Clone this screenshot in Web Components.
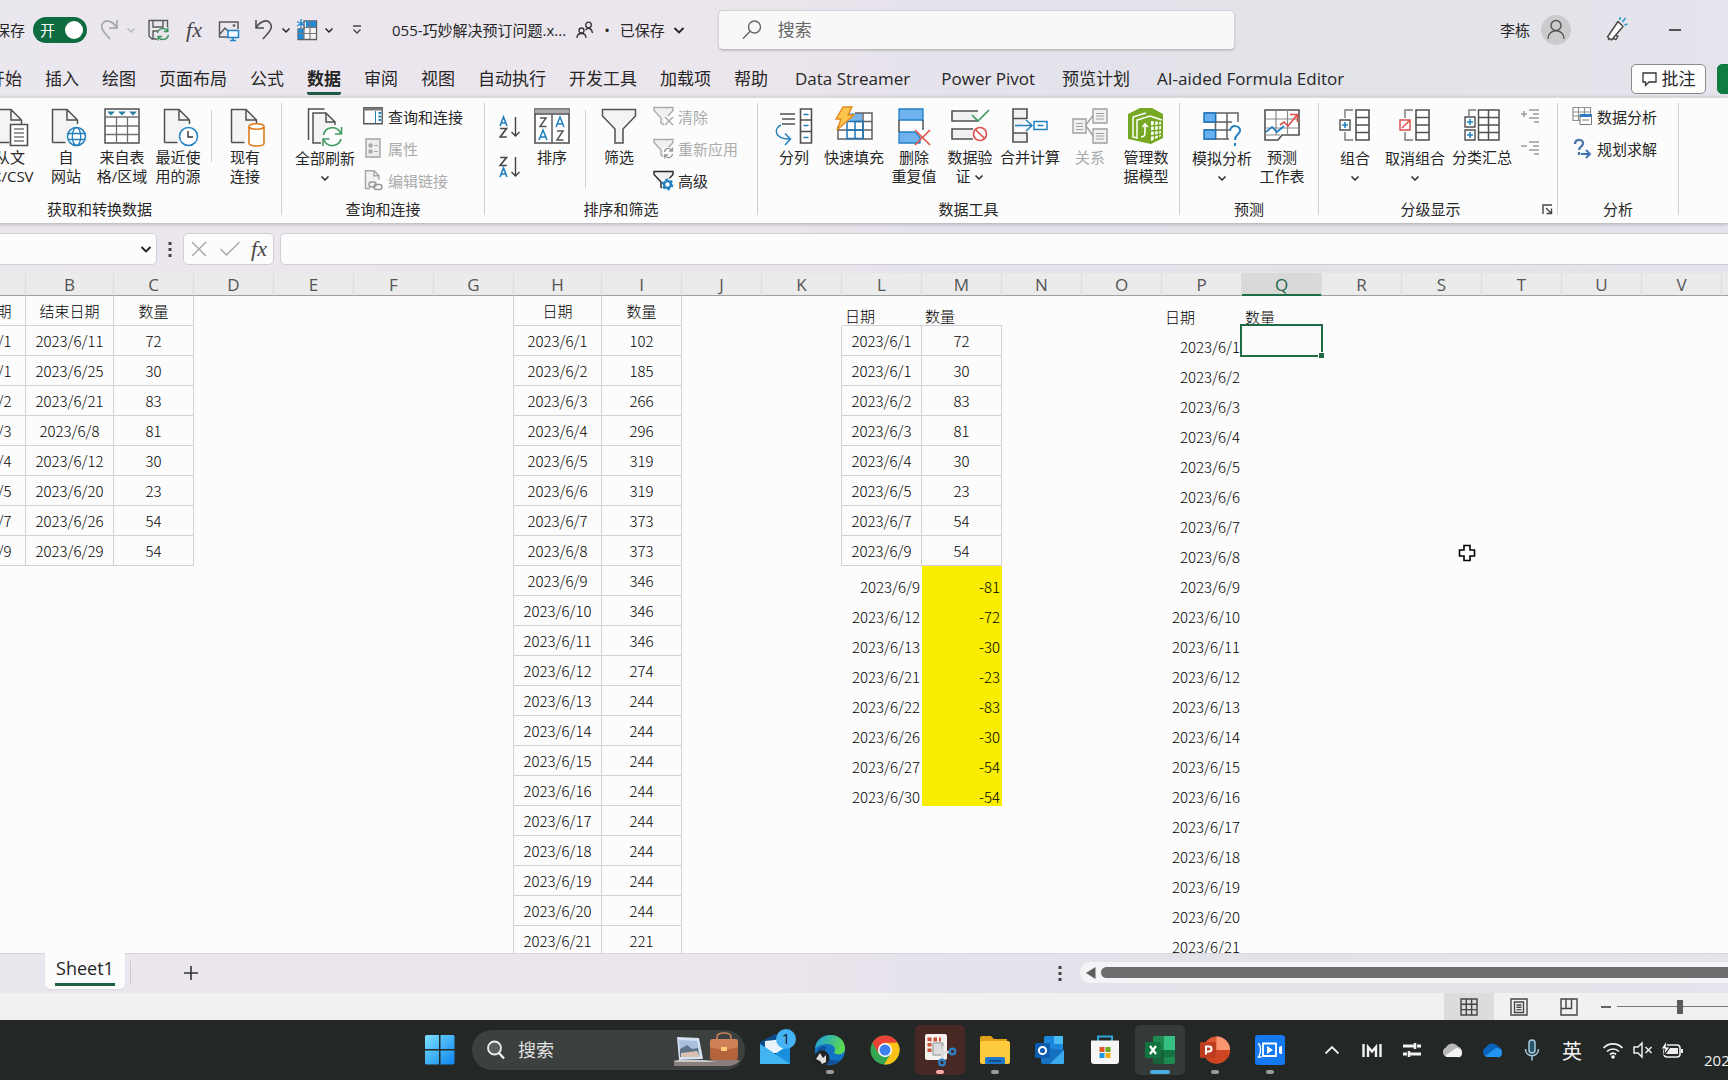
<!DOCTYPE html>
<html lang="zh-CN">
<head>
<meta charset="utf-8">
<title>055-巧妙解决预订问题</title>
<style>
html,body{margin:0;height:100%;overflow:hidden}
body{font-family:"Open Sans","Noto Sans CJK SC",sans-serif;font-size:15px;color:#262626;background:#e9e6ed}
</style>
</head>
<body>
<excel-window></excel-window>
<script>
const PAGE='<path d="M16 34.5H4.5V1.5h14.500l10 10v5" fill="#f4f4f4"/><path d="M4.500 34.500h13M4.500 34.500v-33H19l10.500 10.500v4M19 1.500V12h10.500" fill="none" stroke="#505050" stroke-width="1.500"/>';
const FUN='<path d="M1 1.500h19v3l-7 7.500v8l-5-3v-5L1 4.500z" fill="#f1f1f1" stroke="currentColor" stroke-width="1.400"/>';
const ICONS={
 chev:[10,10,'<path d="M1.500 3.500 5 7l3.500-3.500" fill="none" stroke="currentColor" stroke-width="1.500"/>'],
 chevb:[12,12,'<path d="M1.500 4 6 8.500 10.500 4" fill="none" stroke="#222" stroke-width="1.800"/>'],
 redo:[20,24,'<path d="M18 2v8h-8M18 10C14 3 7 1 4 5c-4 5 2 10 7 16" fill="none" stroke="#a5a5ab" stroke-width="1.600"/>'],
 undo:[20,24,'<path d="M2 2v8h8M2 10C6 3 13 1 16 5c4 5-2 10-7 16" fill="none" stroke="#505055" stroke-width="1.600"/>'],
 save:[22,22,'<path d="M9 20H4l-3-3V1.500h18.500V8M5 1.500V8h10V1.500M5 20v-8h5" fill="none" stroke="#5a5a5a" stroke-width="1.400"/><path d="M9.500 14a5.500 5.500 0 0 1 10-2M19.800 8.500v4h-4M20.500 16a5.500 5.500 0 0 1-10 2M10.200 21.500v-4h4" fill="none" stroke="#3f9460" stroke-width="1.500"/>'],
 pic:[22,22,'<path d="M10 18H1.500V3H20v7M2 15l5-6 4 4" fill="none" stroke="#5a5a5a" stroke-width="1.500"/><circle cx="16" cy="6.500" r="1.300" fill="#555"/><path d="M10 11.500h10.500v7H10zM15 18.500v3M12 21.500h6" fill="#f3faff" stroke="#1e82cc" stroke-width="1.500"/>'],
 qtable:[22,22,'<path d="M8 2h12.500v18.500H2V10h6z" fill="#f7f7f7" stroke="#606060" stroke-width="1.300"/><path d="M10 2h10v6H10zM2 10h6v10H2z" fill="#238bd6"/><path d="M2 14.500h18M8 8.500h12M8 8.500v12M14 2v18" stroke="#777" stroke-width="1.200" fill="none"/><path d="M5 0v9M1 2.500l8 4.500M9 2.500 1 7" stroke="#1e82cc" stroke-width="1.300"/>'],
 custom:[12,12,'<path d="M2 2h8M2.500 5.500 6 9l3.500-3.500" fill="none" stroke="#444" stroke-width="1.300"/>'],
 people:[18,18,'<g fill="none" stroke="#333" stroke-width="1.300"><circle cx="12.500" cy="4" r="2.800"/><path d="M9.500 9c2-2.500 6-2.500 7 3"/><circle cx="5.500" cy="9.500" r="2.500"/><path d="M1 17c0-6 9-6 9 0"/></g>'],
 search:[22,22,'<circle cx="13.500" cy="8" r="6" fill="none" stroke="currentColor" stroke-width="1.400"/><path d="M9.200 12.300 2 19.500" stroke="currentColor" stroke-width="1.400"/>'],
 avatar:[30,30,'<circle cx="15" cy="15" r="15" fill="#cbcbcd"/><circle cx="15" cy="10.500" r="5" fill="none" stroke="#555" stroke-width="1.400"/><path d="M7 24c0-11 16-11 16 0" fill="none" stroke="#555" stroke-width="1.400"/>'],
 pen:[24,24,'<path d="M14 3.500 3.500 19l4 3L19 8.500zM5.500 20.500l-1.500 1.500M11 17.500l3 .5-2 3.500-3-1" fill="#fff" stroke="#444" stroke-width="1.400" stroke-linejoin="round"/><path d="M16 2V-1M18.500 4l3-4M20.500 7l3-1" stroke="#2796c6" stroke-width="1.500"/>'],
 min:[14,14,'<path d="M1 7h12" stroke="#222" stroke-width="1.500"/>'],
 comment:[16,16,'<path d="M1 2h13v9H7l-3.500 3.500V11H1z" fill="none" stroke="#333" stroke-width="1.300"/>'],
 file:[36,36,PAGE+'<path d="M18.500 16.500h17v21h-17z" fill="#fff" stroke="#505050" stroke-width="1.600"/><path d="M22 21h10M22 25h10M22 29h10M22 33h10" stroke="#777" stroke-width="1.300"/>'],
 web:[36,36,PAGE+'<circle cx="28.500" cy="28.500" r="9" fill="#fff" stroke="#2080bd" stroke-width="1.500"/><g fill="none" stroke="#2080bd" stroke-width="1.300"><ellipse cx="28.500" cy="28.500" rx="4.200" ry="9"/><path d="M20 25.500h17M20 31.500h17"/></g>'],
 tbl:[36,36,'<path d="M1 1h34v34H1z" fill="#fff" stroke="#505050" stroke-width="1.500"/><path d="M1 9h34M1 18h34M1 26.500h34M12.500 9v26M23.500 9v26" stroke="#707070" stroke-width="1.300"/><path d="M3 3.500h8L7 7.500zM14 3.500h8l-4 4zM25 3.500h8l-4 4z" fill="#2a7f9e"/>'],
 recent:[36,36,PAGE+'<circle cx="28.500" cy="28.500" r="9" fill="#fff" stroke="#2083c5" stroke-width="1.500"/><path d="M28 23v6h5" fill="none" stroke="#333" stroke-width="1.400"/>'],
 conn:[36,36,PAGE+'<path d="M22 19v16c0 4 15 4 15 0V19" fill="#fff" stroke="#e07c1c" stroke-width="1.600"/><ellipse cx="29.500" cy="18.500" rx="7.500" ry="2.800" fill="#fff" stroke="#e07c1c" stroke-width="1.600"/>'],
 refresh:[36,36,'<path d="M1.500 32V1h16" fill="none" stroke="#505050" stroke-width="1.500"/><path d="M15 35H6V5h14l9 9" fill="#f4f4f4"/><path d="M14 35H6V5h13l9 9v3M19 5v9h9" fill="none" stroke="#505050" stroke-width="1.500"/><circle cx="25" cy="28.500" r="10.500" fill="#fcfcfc"/><path d="M16.500 27a9 9 0 0 1 17-2M34.500 19v7H28M34 31a9 9 0 0 1-17 1M16 38v-7h6.500" fill="none" stroke="#419b62" stroke-width="1.600"/>'],
 qpane:[20,20,'<path d="M.8 1.800h18.400v16H.8z" fill="#fff" stroke="#555" stroke-width="1.400"/><path d="M1 3h18" stroke="#777" stroke-width="3"/><path d="M12.500 5v12" stroke="#2080bd"/><path d="M15.500 7h2.500M15.500 10.500h2.500M15.500 14h2.500" stroke="#2080bd" stroke-width="2"/>'],
 props:[20,20,'<path d="M3 1h14v18H3z" fill="#eee" stroke="#a4a4a4" stroke-width="1.400"/><path d="M6 6h3v3H6zM6 12h3v3H6zM11 7.500h4M11 13.500h4" fill="#aaa" stroke="#aaa"/>'],
 links:[20,20,'<path d="M7 18.500H2.500V.8H11l5 5v4M11 .8v5h5" fill="#f2f2f2" stroke="#a4a4a4" stroke-width="1.400"/><rect x="6" y="12" width="7" height="5" rx="2.500" fill="none" stroke="#999" stroke-width="1.400"/><rect x="11" y="14.500" width="8" height="5" rx="2.500" fill="none" stroke="#999" stroke-width="1.400"/>'],
 az:[22,22,'<path d="m1 10 3.500-9L8 10M2.300 7h4.500" fill="none" stroke="#2080bd" stroke-width="1.600"/><path d="M1.200 12.500h6.300L1.200 21h6.600" fill="none" stroke="#444" stroke-width="1.600"/><path d="M16.500 1v19M12.500 16l4 4 4-4" fill="none" stroke="#444" stroke-width="1.400"/>'],
 za:[22,22,'<path d="M1.200 1.500h6.300L1.200 9.500h6.600" fill="none" stroke="#444" stroke-width="1.600"/><path d="m1 21 3.500-9L8 21M2.300 18h4.500" fill="none" stroke="#2080bd" stroke-width="1.600"/><path d="M16.500 1v19M12.500 16l4 4 4-4" fill="none" stroke="#444" stroke-width="1.400"/>'],
 sort:[36,36,'<path d="M1 1h34v34H1z" fill="#fff" stroke="#505050" stroke-width="1.600"/><path d="M1 3.500h34" stroke="#aaa" stroke-width="4"/><path d="M1 6h34M18 6v29" stroke="#505050" stroke-width="1.400"/><path d="M6 10h6l-6 8.500h6.500M23 23h6l-6 9h6.500" fill="none" stroke="#555" stroke-width="1.500"/><path d="m5 32 4-10 4 10M6.500 29h5M22 19l4-10 4 10M23.500 16h5" fill="none" stroke="#2080bd" stroke-width="1.500"/>'],
 filter:[36,36,'<path d="M1.500 1.500h33V8L22 21v14h-8V21L1.500 8z" fill="#f4f4f4" stroke="#505050" stroke-width="1.500"/>'],
 fclear:[20,20,FUN+'<path d="M11 10h10v11H11z" fill="#fcfcfc"/><path d="m12 11 8 8M20 11l-8 8" stroke="#aaa" stroke-width="1.400"/>'],
 freap:[20,20,FUN+'<path d="M10 9h11v12H10z" fill="#fcfcfc"/><path d="M11.500 14a4 4 0 0 1 7.500-1.500M19.500 9.500V13H16M19.500 16a4 4 0 0 1-7.500 1.500M11.500 20.500V17H15" fill="none" stroke="#999" stroke-width="1.300"/>'],
 fadv:[20,20,FUN+'<path d="M9 8.500h12V21H9z" fill="#fcfcfc"/><circle cx="14.500" cy="14.500" r="3.400" fill="none" stroke="#2080bd" stroke-width="2.400"/><circle cx="14.500" cy="14.500" r="5" fill="none" stroke="#2080bd" stroke-width="1.800" stroke-dasharray="2.600"/>'],
 split:[38,36,'<path d="M25.500 1h11v34h-11zM25.500 12h11M25.500 23.500h11" fill="#fff" stroke="#505050" stroke-width="1.600"/><path d="M5 6h15M7 11h13M7 16h13" stroke="#505050" stroke-width="1.400"/><path d="M28.500 6.500h5M28.500 17.500h5M28.500 29.500h5" stroke="#2080bd" stroke-width="1.600"/><path d="M6 17c-8 4-6 14 8 14M10 25.500l5.500 5.500-5.500 6" fill="none" stroke="#2080bd" stroke-width="1.500"/>'],
 flash:[38,36,'<path d="M3 5h34v26H3z" fill="#fff"/><path d="M13 5h14v9H13z" fill="#78b7ec"/><path d="M20 5h17v26H3V18M3 22h34M20 13.500h17M28 5v26" fill="none" stroke="#606060" stroke-width="1.500"/><path d="M12 13.500h16v17H12zM12 22h16M20 13v18" fill="none" stroke="#1d75b8" stroke-width="1.500"/><path d="M8-1h9l-4 8h6L2 22l4-11H1z" fill="#fbc44d" stroke="#e58a1d" stroke-width="1.400"/>'],
 dup:[36,36,'<path d="M3 1h24v34H3z" fill="#fff"/><path d="M3 1h24v11H3zM3 24h16l5 5v6H3z" fill="#70b2ed" stroke="#2080c5" stroke-width="1.300"/><path d="M3 12v12M27 12v10" stroke="#505050" stroke-width="1.500"/><path d="m19 22 15 15M34 22 19 37" stroke="#e0574c" stroke-width="1.700"/>'],
 valid:[38,36,'<path d="M27 3H1v10h26M22 21H1v10h21" fill="#f1f1f1" stroke="#505050" stroke-width="1.600"/><path d="M21 7l6 6L38 2" fill="none" stroke="#419b62" stroke-width="1.700"/><circle cx="29" cy="26" r="6.500" fill="#fff" stroke="#dd524c" stroke-width="1.700"/><path d="m24.500 21.500 9 9" stroke="#dd524c" stroke-width="1.700"/>'],
 merge:[36,36,'<path d="M15 11V1H1v33h14V25H1M1 10.500h14" fill="#f1f1f1" stroke="#505050" stroke-width="1.600"/><path d="M3 17.500h16M14 12l6 5.500-6 5.500" fill="none" stroke="#2080bd" stroke-width="1.500"/><path d="M22 13.500h13v8H22zM25.500 17.500h6" fill="#fff" stroke="#2080bd" stroke-width="1.500"/>'],
 rel:[36,36,'<g fill="#f1f1f1" stroke="#a0a0a0" stroke-width="1.400"><path d="M14 17 22 6M14 18l8 11"/><path d="M1 11h13v14H1zM21 1h14v14H21zM21 21h14v14H21z"/><path d="M4 15.500h7M4 18.500h7M4 21.500h7M24 5.500h8M24 8h8M24 11h8M24 25.500h8M24 28h8M24 31h8" stroke-width="1.200"/></g>'],
 model:[36,36,'<path d="M0 6 12 0h12l11 6v24l-12 6L0 31z" fill="#76a823"/><path d="M5 9 18 5M5 9v20l4 1V12l13-4 12 4" stroke="#fff" stroke-width="1.500" fill="none"/><path d="M23 13l10 1v14l-10 5z" fill="#fff"/><path d="M22.500 18 34 17M22.500 23l11.500-1M22.500 28l11.500-2M26.500 13v20M30.500 13v17M12 13v16M12 17l8-1" stroke="#76a823" stroke-width="1.400"/><path d="M17 17v8c0 4-4 4-4 4M14.500 19l2.500-3 3 3" fill="none" stroke="#fff" stroke-width="1.600"/>'],
 whatif:[38,36,'<path d="M1 5h34v26H1z" fill="#fff"/><path d="M1 5h34v9M1 14h28M1 22h25M1 31h25M12.500 5v26M24 5v26" fill="none" stroke="#606060" stroke-width="1.500"/><path d="M1 5h11.500v9H1zM1 22h11.500v9H1z" fill="#69b0f0" stroke="#1d75b8" stroke-width="1.500"/><path d="M27 23c0-7 11-6 10 0-1 4-5 3.500-5 9M32 35v3" fill="none" stroke="#2080bd" stroke-width="2"/>'],
 forecast:[36,36,'<path d="M1 2h34v25H18l-4 5H1z" fill="#fff" stroke="#505050" stroke-width="1.600"/><path d="M1 11h34M1 20h34M12 2v25M23.500 2v25M1 27h15" stroke="#888" stroke-width="1.200"/><path d="m2 24 6-5 5 5 7-6" fill="none" stroke="#2080bd" stroke-width="1.700"/><path d="m16 17 4-3 4 4 9-11M26 6.500h7.500V14" fill="none" stroke="#dd524c" stroke-width="1.700"/>'],
 group:[32,36,'<path d="M14 2H6v8M6 24v8h8" fill="none" stroke="#777" stroke-width="1.400"/><path d="M17 2h13v30H17zM17 9.500h13M17 17h13M17 24.500h13" fill="#fff" stroke="#505050" stroke-width="1.600"/><path d="M1 12h10v10H1z" fill="#fff" stroke="#505050" stroke-width="1.400"/><path d="M6 14v6M3 17h6" stroke="#2080bd" stroke-width="1.600"/>'],
 ungroup:[32,36,'<path d="M14 2H6v8M6 24v8h8" fill="none" stroke="#777" stroke-width="1.400"/><path d="M17 2h13v30H17zM17 9.500h13M17 17h13M17 24.500h13" fill="#fff" stroke="#505050" stroke-width="1.600"/><path d="M1 12h10v10H1zM3 20l7-7" fill="#fff" stroke="#dd524c" stroke-width="1.500"/>'],
 subtotal:[36,36,'<path d="M12 2H5v6" fill="none" stroke="#777" stroke-width="1.400"/><path d="M14.500 2h20.500v30H14.500zM14.500 9.500H35M14.500 17H35M14.500 24.500H35M24.500 2v30" fill="#fff" stroke="#505050" stroke-width="1.500"/><path d="M1 9h10v10H1zM1 22h10v10H1z" fill="#fff" stroke="#505050" stroke-width="1.400"/><path d="M6 11v6M3 14h6M6 24v6M3 27h6" stroke="#2080bd" stroke-width="1.600"/>'],
 expand:[20,16,'<path d="M1 6h6M4 3v6M9 2h10M13 6h6M9 10h10M14 14h5" stroke="#9a9a9a" stroke-width="1.500"/>'],
 collapse:[20,16,'<path d="M1 6h6M9 2h10M13 6h6M9 10h10M14 14h5" stroke="#9a9a9a" stroke-width="1.500"/>'],
 launch:[11,11,'<path d="M1 10V1h9M4 4l5 5M9.500 4.500v5h-5" fill="none" stroke="#444" stroke-width="1.400"/>'],
 danal:[20,20,'<path d="M1 1.500h17.500v13H1zM1 6h17M1 10h17M6.500 1v14M12.500 1v14" fill="#fff" stroke="#909090" stroke-width="1.200"/><path d="M8 8.500h11.500v10H8z" fill="#fff" stroke="#777"/><path d="M8 9.500h11.500" stroke="#2b7ac4" stroke-width="3"/><path d="M10 14h7" stroke="#777"/>'],
 solver:[20,20,'<path d="M3 6c0-6 9-5 8 0-1 3-4 3-4 6M7 14v3" fill="none" stroke="#4a75ab" stroke-width="2.300"/><path d="M9 16h8M14 12l4 4-4 4" fill="none" stroke="#3c70b0" stroke-width="1.800"/>'],
 dots:[4,16,'<path d="M.5 1h3v3h-3zM.5 7h3v3h-3zM.5 13h3v3h-3z" fill="#444"/>'],
 x:[18,18,'<path d="m2 2 14 14M16 2 2 16" stroke="#aaa" stroke-width="1.500"/>'],
 check:[22,18,'<path d="m1.500 9 6 6 13-13" fill="none" stroke="#aaa" stroke-width="1.500"/>'],
 plus:[14,14,'<path d="M0 7h14M7 0v14" stroke="#333" stroke-width="1.600"/>'],
 left:[10,12,'<path d="M9.500 0v12L0 6z" fill="#5e5e5e"/>'],
 vgrid:[18,18,'<path d="M1 1h16v16H1zM1 6.300h16M1 11.600h16M6.300 1v16M11.600 1v16" fill="none" stroke="#444" stroke-width="1.400"/>'],
 vpage:[18,18,'<path d="M1 1h16v16H1zM4.500 4h9v10.500h-9zM6.500 7h5M6.500 9.300h5M6.500 11.600h5" fill="none" stroke="#444" stroke-width="1.400"/>'],
 vbreak:[18,18,'<path d="M1 1h16v16H1zM1 10.500h10.500V1M6 1v9" fill="none" stroke="#444" stroke-width="1.400"/>'],
 cell:[18,18,'<path d="M6 1.500h6V6h4.500v6H12v4.500H6V12H1.500V6H6z" fill="#fff" stroke="#000" stroke-width="1.600"/>'],
 win:[30,30,'<defs><linearGradient id="w" x2="1" y2="1"><stop stop-color="#7ce0fd"/><stop offset="1" stop-color="#0a84ee"/></linearGradient></defs><path d="M0 1.500Q0 0 1.500 0H14v14H0zM15.500 0H28q1.500 0 1.500 1.500V14h-14zM0 15.500h14v14H1.500Q0 29.500 0 28zM15.500 15.500h14V28q0 1.500-1.500 1.500H15.500z" fill="url(#w)"/>'],
 tsearch:[20,20,'<circle cx="8.500" cy="8" r="6.500" fill="#58605c" stroke="#eee" stroke-width="1.800"/><path d="m13 13 5 5.500" stroke="#eee" stroke-width="2.400"/>'],
 brief:[68,34,'<path d="M1 27h58l8 0q-4 6-13 6H1z" fill="#8a807b"/><path d="m4 4 22 1 4 21-24 1z" fill="#d7e2f2"/><path d="m6 7 18 1 3 15-20 1z" fill="#a9bfdc"/><path d="m7 16 7-4 5 4 6-1 1 8-19 1z" fill="#5d7389"/><path d="m8 20 16-2 3 6H8z" fill="#d9c2b4"/><path d="M6 27h24l14 2H1z" fill="#c9c9cc"/><path d="M44 7V4q0-4 7-4t7 4v3" fill="none" stroke="#c5805c" stroke-width="1.600"/><rect x="37" y="6" width="28" height="21" rx="3" fill="#b4633c"/><path d="M37 9q0-3 3-3h22q3 0 3 3v5q-14 5-28 0z" fill="#cf8056"/><rect x="48" y="14" width="6" height="4" fill="#ffcb7a"/>'],
 mail:[34,38,'<path d="m2 15 15-8 15 8v5H2z" fill="#0e4a8b"/><path d="m7 14 19-2v14H7z" fill="#e9f1fa"/><path d="M2 17v20h30V17L17 27z" fill="#1791de"/><path d="M2 37V17l30 20z" fill="#42b4f2"/>'],
 edge:[32,32,'<defs><linearGradient id="e" x2="1" y2=".3"><stop stop-color="#1a9ce4"/><stop offset="1" stop-color="#5bd854"/></linearGradient></defs><circle cx="16" cy="16" r="15" fill="#1272c4"/><path d="M1 15C2-3 31-4 31 15c0 5-7 7-11 4 3-5-1-9-6-9C8 10 3 12 1 15z" fill="url(#e)"/><path d="M12 13c-4 8 2 16 14 13-5 6-17 6-22-2-3-8 2-13 8-11z" fill="#144f96"/><circle cx="8" cy="24" r="7.500" fill="#222"/><path d="M2 25l4-6 3 5 3-3v7l-4 2-2-3z" fill="#ddd"/>'],
 chrome:[30,30,'<circle cx="15" cy="15" r="14.500" fill="#35a753"/><path d="M2.400 7.800A14.500 14.500 0 0 1 27.600 7.800L15 8.500 9 19z" fill="#ea4335"/><path d="M27.600 7.800A14.500 14.500 0 0 1 14 29.500L21 18.500 15 7.800z" fill="#fbc116"/><circle cx="15" cy="15" r="7" fill="#fff"/><circle cx="15" cy="15" r="5.500" fill="#3d7fed"/>'],
 snip:[32,32,'<rect x="1" y="0" width="22" height="26" rx="2" fill="#f5f2f0"/><path d="M5.500 18V5.500H17" fill="none" stroke="#c75234" stroke-width="4" stroke-dasharray="3.500 2"/><rect x="8" y="8" width="12" height="14" rx="2" fill="#b9b9b9"/><rect x="10" y="10" width="7" height="10" fill="#ddd"/><path d="m13 19 13-1M19 12l-1 14" stroke="#ddd" stroke-width="2.500"/><circle cx="28.500" cy="17.500" r="2.800" fill="none" stroke="#2a83c8" stroke-width="2.200"/><circle cx="18" cy="28.500" r="2.800" fill="none" stroke="#2a83c8" stroke-width="2.200"/>'],
 folder:[32,32,'<path d="M1 4q0-2 2-2h9l3 3h13v6H1z" fill="#e3a11a"/><rect x="1" y="7" width="30" height="23" rx="2" fill="#fecb3e"/><path d="M6 30v-5q0-2 2-2h16q2 0 2 2v5z" fill="#1e78c7"/><path d="M10 27h12" stroke="#0c4e91" stroke-width="2"/>'],
 outlook:[30,30,'<rect x="9" y="1" width="19" height="15" rx="1.500" fill="#1c88dc"/><path d="M19 1h9v8h-9z" fill="#4bbdf5"/><path d="M6 12l23 3v13q0 1-1.500 1H8q-2 0-2-2z" fill="#1572c2"/><path d="m29 15-14 14h13q1 0 1-1z" fill="#3ba9ec"/><rect x="0" y="8" width="15" height="15" rx="1.500" fill="#0d5cad"/><circle cx="7.500" cy="15.500" r="3.600" fill="none" stroke="#fff" stroke-width="2"/>'],
 store:[30,30,'<path d="M8 7V1.500h14V7" fill="none" stroke="#2fa4d8" stroke-width="2"/><path d="M1 5.500h28V26q0 3-3 3H4q-3 0-3-3z" fill="#f6f6f6"/><path d="M9.500 12h5v5h-5z" fill="#e1582b"/><path d="M15.500 12h5v5h-5z" fill="#6fa622"/><path d="M9.500 18h5v5h-5z" fill="#1e98df"/><path d="M15.500 18h5v5h-5z" fill="#f3ae17"/>'],
 excel:[30,30,'<rect x="8" y="1" width="22" height="28" rx="2" fill="#1e8a52"/><path d="M19 1h11v14H19z" fill="#35c184"/><path d="M19 15h11v7H19z" fill="#167343"/><path d="M8 15h11v14H8z" fill="#176238"/><rect x="0" y="7" width="16" height="16" rx="1.500" fill="#127440"/><path d="m5 11 6 8M11 11l-6 8" stroke="#fff" stroke-width="2.200"/>'],
 ppt:[30,30,'<circle cx="16.500" cy="15" r="13.500" fill="#de5c34"/><path d="M16.500 1.500A13.500 13.500 0 0 1 30 15H16.500z" fill="#fb9671"/><path d="M3 15h27a13.500 13.500 0 0 1-27 0z" fill="#cf4423"/><rect x="0" y="7" width="16" height="16" rx="1.500" fill="#bd3e1e"/><path d="M6 19.500v-8h3q2.500 0 2.500 2.400T9 16.400H6" fill="none" stroke="#fff" stroke-width="2"/>'],
 video:[30,30,'<rect width="30" height="30" rx="3" fill="#1478ef"/><path d="M8 8.500h13V21H8z" fill="none" stroke="#fff" stroke-width="1.800"/><path d="m12 11 6 4-6 4zM24 13q0-2 3-2v8q-3 0-3-2z" fill="#fff"/><path d="M3.500 8q2 3 2 7t-2 7h3" fill="none" stroke="#fff" stroke-width="1.400"/>'],
 up:[16,10,'<path d="m1.500 8.500 6.500-6.500 6.500 6.500" fill="none" stroke="#eee" stroke-width="1.800"/>'],
 maxhub:[20,16,'<path d="M1.500 2v13M18.500 2v13M6 15V5l4 4.500L14 5v10" fill="none" stroke="#f2f2f2" stroke-width="2.400"/>'],
 eq:[18,16,'<path d="M0 4h11M14 4h4M0 12h4M7 12h11" stroke="#f2f2f2" stroke-width="3"/><path d="M12 1v6M6 9v6" stroke="#f2f2f2" stroke-width="2.500"/>'],
 cloud:[22,16,'<path d="M6 15a5 5 0 0 1-1-9.500 7 7 0 0 1 12-1A5.500 5.500 0 0 1 17 15z" fill="#b8b8b8"/><path d="M4 14 15 6q6 0 6 5t-5 4H6z" fill="#f4f4f4"/>'],
 bcloud:[22,16,'<path d="M6 15a5 5 0 0 1-1-9.500 7 7 0 0 1 12-1A5.500 5.500 0 0 1 17 15z" fill="#0c63bb"/><path d="M4 14 15 6q6 0 6 5t-5 4H6z" fill="#2195f0"/>'],
 mic:[16,22,'<rect x="5" y="1" width="6" height="13" rx="3" fill="#27566a" stroke="#a5cbe0" stroke-width="1.500"/><path d="M1.500 10c0 9 13 9 13 0M8 17v4.500" fill="none" stroke="#a5cbe0" stroke-width="1.500"/>'],
 wifi:[22,18,'<path d="M1.500 7a13 13 0 0 1 19 0M5 10.500a8.500 8.500 0 0 1 12 0M8 13.500a4.500 4.500 0 0 1 6 0" fill="none" stroke="#f2f2f2" stroke-width="1.700"/><circle cx="11" cy="16" r="1.800" fill="#fff"/>'],
 mute:[20,18,'<path d="M1 6h4l4-4v14l-4-4H1z" fill="none" stroke="#eee" stroke-width="1.500"/><path d="m12.500 6 6 6M18.500 6l-6 6" stroke="#eee" stroke-width="1.500"/>'],
 batt:[22,18,'<rect x="2" y="4" width="16" height="12" rx="3" fill="none" stroke="#eee" stroke-width="1.600"/><path d="M8 7h8v6H4z" fill="#eee"/><path d="M20 8v4" stroke="#eee" stroke-width="2"/><path d="M5-1-1 8h4l-1 6 6-8H4z" fill="#fff" stroke="#232826"/>']
};
const BASE=`<style>
*{box-sizing:border-box}
button{font:inherit;color:inherit;background:none;border:0;padding:0;margin:0;display:flex;align-items:center;justify-content:center;flex:none}
input{font:inherit;color:inherit;border:0;background:none;outline:0;padding:0;margin:0;min-width:0}
a{color:inherit;text-decoration:none}
</style>`;
function define(name,html,init){
  customElements.define(name,class extends HTMLElement{
    constructor(){super();this.attachShadow({mode:'open'});}
    connectedCallback(){
      this.shadowRoot.innerHTML=BASE+(typeof html==='function'?html(this):html);
      if(init)init(this.shadowRoot);
    }
  });
}

define('x-icon',el=>{const [w,h,s]=ICONS[el.getAttribute('name')];
 return `<style>:host{display:block;flex:none}svg{display:block;overflow:visible}</style><svg width="${w}" height="${h}" viewBox="0 0 ${w} ${h}" aria-hidden="true">${s}</svg>`});

define('fx-mark','<style>:host{display:block;font:italic 22px/24px "Liberation Serif",serif;color:#444}</style><slot>fx</slot>');

define('title-bar',`<style>
:host{display:flex;align-items:center;height:58px;padding-top:1px;white-space:nowrap;line-height:20px;flex:none}
.autosave{display:flex;align-items:center;gap:8px;margin-left:-35px}
.autosave input{position:absolute;opacity:0}
.toggle{display:flex;align-items:center;justify-content:space-between;width:54px;height:26px;border-radius:13px;background:#0f6c41;color:#fff;padding:0 4px 0 7px}
.toggle i{width:18px;height:18px;border-radius:50%;background:#fff}
.qat{display:flex;align-items:center;margin-left:8px}
.qat button{width:28px;height:28px}
.qat .d{width:15px}
.qat .g{margin-left:7px}
.faint{color:#b8b8be}
.name{margin-left:21px}
.doc{display:flex;align-items:center;gap:10px}
.saved{display:flex;align-items:center;gap:8px}
.search{display:flex;align-items:center;gap:15px;flex:0 1 517px;margin-left:33px;height:40px;padding-left:22px;background:#f8f8f8;border:1px solid #d4d2d8;border-bottom-color:#bbb;border-radius:5px;color:#666;box-shadow:0 1px 2px #0002;font-size:17px}
.search input{flex:1;height:36px}
.search input::placeholder{color:#666;opacity:1}
.right{display:flex;align-items:center;margin-left:auto;margin-right:-12px}
.right .u{gap:11px}
.right .p{width:24px;margin:0 39px 0 33px}
.right .m{width:16px}
.right .x{width:12px;height:13px;border:1px solid #444;border-radius:3px;margin-left:45px}
</style>
<label class="autosave"><span>自动保存</span><input type="checkbox" checked><span class="toggle">开<i></i></span></label>
<div class="qat"><button aria-label="恢复"><x-icon name="redo"></x-icon></button><button class="d faint" aria-label="恢复选项"><x-icon name="chev"></x-icon></button><button aria-label="保存" class="g"><x-icon name="save"></x-icon></button><button aria-label="插入函数" class="g"><fx-mark>fx</fx-mark></button><button aria-label="图片" class="g"><x-icon name="pic"></x-icon></button><button aria-label="撤消" class="g"><x-icon name="undo"></x-icon></button><button class="d" aria-label="撤消选项"><x-icon name="chev"></x-icon></button><button aria-label="冻结窗格"><x-icon name="qtable"></x-icon></button><button class="d" aria-label="冻结选项"><x-icon name="chev"></x-icon></button><button class="g" aria-label="自定义工具栏"><x-icon name="custom"></x-icon></button></div>
<div class="doc"><span class="name">055-巧妙解决预订问题.x...</span><x-icon name="people"></x-icon><span>•</span><button class="saved">已保存<x-icon name="chevb"></x-icon></button></div>
<label class="search"><x-icon name="search"></x-icon><input placeholder="搜索" aria-label="搜索"></label>
<div class="right"><button class="u">李栋<x-icon name="avatar"></x-icon></button><button class="p" aria-label="画笔"><x-icon name="pen"></x-icon></button><button class="m" aria-label="最小化"><x-icon name="min"></x-icon></button><button class="x" aria-label="最大化"></button></div>`);

define('ribbon-tabs',`<style>
:host{display:flex;justify-content:space-between;height:39px;font-size:17px;line-height:26px;white-space:nowrap;flex:none}
nav{display:flex;gap:23px;margin-left:-12px}
a{height:37px;padding-top:8px}
a[aria-current]{font-weight:700;border-bottom:3px solid #1d5a41;border-radius:0 0 2px 2px}
.addin{padding-left:4px;padding-right:4px}
.act{display:flex;gap:11px;padding-top:6px;margin-right:-29px}
.act button{height:30px;border:1px solid #8a8a8a;border-radius:5px;background:#fdfdfd;width:75px;gap:4px}
.act .share{width:40px;background:#107c41;border-color:#107c41}
</style>
<nav><a href="#">开始</a><a href="#">插入</a><a href="#">绘图</a><a href="#">页面布局</a><a href="#">公式</a><a href="#" aria-current="page">数据</a><a href="#">审阅</a><a href="#">视图</a><a href="#">自动执行</a><a href="#">开发工具</a><a href="#">加载项</a><a href="#">帮助</a><a href="#" class="addin">Data Streamer</a><a href="#" class="addin">Power Pivot</a><a href="#">预览计划</a><a href="#" class="addin">AI-aided Formula Editor</a></nav>
<div class="act"><button><x-icon name="comment"></x-icon>批注</button><button class="share" aria-label="共享"></button></div>`);

define('ribbon-button',el=>`<style>
:host{display:block;flex:none;width:56px}
:host([wide]){width:64px}
:host([disabled]){color:#ababab}
button{flex-direction:column;width:100%;padding-top:5px;line-height:19px;white-space:nowrap;justify-content:flex-start}
span{margin-top:4px;text-align:center}
:host([menu]) span{margin-top:5px}
:host([menu]) .c{height:19px;display:flex;align-items:center}
</style><button><x-icon name="${el.getAttribute('icon')}"></x-icon><span><slot></slot></span>${el.hasAttribute('menu')?'<div class="c"><x-icon name="chev"></x-icon></div>':''}</button>`);

define('ribbon-small',el=>`<style>
:host{display:block;white-space:nowrap}
:host([disabled]){color:#ababab}
button{height:26px;gap:5px}
</style><button aria-label="${el.getAttribute('label')||el.textContent}"><x-icon name="${el.getAttribute('icon')}"></x-icon><slot></slot></button>`);

define('ribbon-group',el=>`<style>
:host{display:flex;flex-direction:column;flex:none;height:112px;border-right:1px solid #d0d0d0}
.body{display:flex;flex:1;padding:0 8px}
.foot{display:flex;justify-content:center;align-items:center;line-height:12px;height:12px;white-space:nowrap}
.foot button{margin:0 4px 0 auto}
.foot.l span{margin-left:auto}
</style><div class="body"><slot></slot></div><div class="foot ${el.hasAttribute('launcher')?'l':''}"><span>${el.getAttribute('label')}</span>${el.hasAttribute('launcher')?'<button aria-label="分级显示设置"><x-icon name="launch"></x-icon></button>':''}</div>`);

define('ribbon-bar',`<style>
:host{display:flex;height:126px;margin-left:-82px;background:#fcfcfc;box-shadow:0 1px 4px #0004;position:relative;flex:none;border-top:1px solid #dcdadf;padding-top:5px}
.col{display:flex;flex-direction:column;gap:6px;margin-left:6px}
.az{width:25px;gap:14px;padding-top:11px}
.sep{width:1px;height:52px;background:#d0d0d0;margin:7px 5px 0}
.tall{height:78px}
.lead{width:56px}
.g2{width:203px}.g3{width:273px}.g4{width:422px}.g5{width:139px}.g6{width:239px}.g7{width:121px}
.in{width:3px}
i{display:block}
</style>
<ribbon-group label="获取和转换数据"><i class="lead"></i><ribbon-button icon="file">从文<br>本/CSV</ribbon-button><ribbon-button icon="web">自<br>网站</ribbon-button><ribbon-button icon="tbl">来自表<br>格/区域</ribbon-button><ribbon-button icon="recent">最近使<br>用的源</ribbon-button><i class="sep"></i><ribbon-button icon="conn">现有<br>连接</ribbon-button></ribbon-group>
<ribbon-group class="g2" label="查询和连接"><i class="in"></i><ribbon-button wide menu icon="refresh">全部刷新</ribbon-button><div class="col"><ribbon-small icon="qpane">查询和连接</ribbon-small><ribbon-small disabled icon="props">属性</ribbon-small><ribbon-small disabled icon="links">编辑链接</ribbon-small></div></ribbon-group>
<ribbon-group class="g3" label="排序和筛选"><div class="col az"><ribbon-small icon="az" label="升序"></ribbon-small><ribbon-small icon="za" label="降序"></ribbon-small></div><ribbon-button icon="sort">排序</ribbon-button><i class="sep tall"></i><ribbon-button icon="filter">筛选</ribbon-button><div class="col"><ribbon-small disabled icon="fclear">清除</ribbon-small><ribbon-small disabled icon="freap">重新应用</ribbon-small><ribbon-small icon="fadv">高级</ribbon-small></div></ribbon-group>
<ribbon-group class="g4" label="数据工具"><ribbon-button icon="split">分列</ribbon-button><ribbon-button wide icon="flash">快速填充</ribbon-button><ribbon-button icon="dup">删除<br>重复值</ribbon-button><ribbon-button icon="valid">数据验<br>证 <x-icon name="chev" style="display:inline-block"></x-icon></ribbon-button><ribbon-button wide icon="merge">合并计算</ribbon-button><ribbon-button disabled icon="rel">关系</ribbon-button><ribbon-button icon="model">管理数<br>据模型</ribbon-button></ribbon-group>
<ribbon-group class="g5" label="预测"><i class="in"></i><ribbon-button wide menu icon="whatif">模拟分析</ribbon-button><ribbon-button icon="forecast">预测<br>工作表</ribbon-button></ribbon-group>
<ribbon-group class="g6" label="分级显示" launcher><ribbon-button menu icon="group">组合</ribbon-button><ribbon-button wide menu icon="ungroup">取消组合</ribbon-button><i class="in"></i><ribbon-button wide icon="subtotal">分类汇总</ribbon-button><div class="col"><ribbon-small icon="expand" label="显示明细数据"></ribbon-small><ribbon-small icon="collapse" label="隐藏明细数据"></ribbon-small></div></ribbon-group>
<ribbon-group class="g7" label="分析"><div class="col"><ribbon-small icon="danal">数据分析</ribbon-small><ribbon-small icon="solver">规划求解</ribbon-small></div></ribbon-group>`);

define('formula-bar',`<style>
:host{display:flex;align-items:center;height:50px;padding-top:1px;flex:none}
div{display:flex;align-items:center;height:32px;background:#fcfcfc;border:1px solid #d0ced4;border-radius:5px}
.nm{width:161px;margin-left:-4px;padding-right:4px}
.nm input{flex:1}
.ops{width:91px;justify-content:space-between;padding:0 6px;margin:0 6px 0 11px}
.fx{flex:1;margin-right:-6px}
.fx input{flex:1;height:28px}
x-icon.dt{margin-left:11px}
</style>
<div class="nm"><input aria-label="名称框"><button aria-label="名称列表"><x-icon name="chevb"></x-icon></button></div><x-icon class="dt" name="dots"></x-icon>
<div class="ops"><button aria-label="取消"><x-icon name="x"></x-icon></button><button aria-label="输入"><x-icon name="check"></x-icon></button><button aria-label="插入函数"><fx-mark>fx</fx-mark></button></div><div class="fx"><input aria-label="编辑栏"></div>`);

define('sheet-grid',`<style>
:host{display:block;flex:1 1 0;min-height:0;overflow:hidden;background:#fcfcfc;position:relative;font-family:"Noto Sans CJK SC",sans-serif}
table{table-layout:fixed;border-spacing:0;margin-left:-62px;width:1864px}
col{width:80px}col.w{width:88px}
th{height:23px;padding:2px 0 0;background:#ebebeb;border-right:1px solid #dcdcdc;border-bottom:1px solid #a0a0a0;font:400 17px/20px "Open Sans",sans-serif;color:#555}
th.on{background:#d9d9d9;box-shadow:inset 0 -1px #1e6b45;border-bottom-color:#1e6b45;color:#28664c}
td{height:30px;padding:0 2px;vertical-align:bottom;line-height:18px;font-size:15px;font-weight:300;color:#000;white-space:nowrap;text-align:right;border:0 solid #d2d2d2}
td.c{text-align:center;vertical-align:middle}
td.h{text-align:left;padding-left:3px}
td.r{border-right-width:1px}td.b{border-bottom-width:1px}
td.y{background:#faee00}
td.sel{position:relative}
td.sel div{position:absolute;inset:-2px -1px -1px -2px;border:2px solid #1e6b45}
td.sel div::after{content:"";position:absolute;right:-3px;bottom:-3px;width:5px;height:5px;background:#1e6b45;border:1px solid #fcfcfc;border-right:0;border-bottom:0;box-sizing:content-box}
.cur{position:absolute;left:1458px;top:271px}
</style><table><colgroup></colgroup><thead><tr></tr></thead><tbody></tbody></table><x-icon class="cur" name="cell"></x-icon>`,root=>{
 const L='ABCDEFGHIJKLMNOPQRSTUVW'.split('');
 root.querySelector('colgroup').innerHTML=L.map(c=>`<col${'ABH'.includes(c)?' class="w"':''}>`).join('');
 root.querySelector('thead tr').innerHTML=L.map(c=>`<th scope="col"${c==='Q'?' class="on"':''}>${c}</th>`).join('');
 const d=n=>'2023/6/'+n, V={};
 const put=(col,row,vals)=>vals.forEach((v,i)=>V[col+(row+i)]=v);
 put('A',1,['开始日期',...[1,1,2,3,4,5,7,9].map(d)]);
 put('B',1,['结束日期',...[11,25,21,8,12,20,26,29].map(d)]);
 put('C',1,['数量',72,30,83,81,30,23,54,54]);
 const days=Array.from({length:21},(_,i)=>d(i+1));
 put('H',1,['日期',...days]);
 put('I',1,['数量',102,185,266,296,319,319,373,373,346,346,346,274,244,244,244,244,244,244,244,244,221]);
 put('L',1,['日期',...[1,1,2,3,4,5,7,9,9,12,13,21,22,26,27,30].map(d)]);
 put('M',1,['数量',72,30,83,81,30,23,54,54,-81,-72,-30,-23,-83,-30,-54,-54]);
 put('P',1,['日期',...days]);put('Q',1,['数量']);
 const box=(c,r)=>c&&(('ABC'.includes(c)&&r<=9)||'HI'.includes(c)||('LM'.includes(c)&&r>1&&r<=9));
 let out='';
 for(let r=1;r<=22;r++){out+='<tr>';L.forEach((c,i)=>{
  const k=[];if(box(c,r))k.push('c');else if(r===1)k.push('h');
  if(box(c,r)||box(L[i+1],r))k.push('r');
  if(box(c,r)||(r<22&&box(c,r+1)))k.push('b');
  if(c==='M'&&r>9&&r<18)k.push('y');
  const s=c==='Q'&&r===2;if(s)k.push('sel');
  out+=`<td${k.length?` class="${k.join(' ')}"`:''}>${s?'<div></div>':V[c+r]??''}</td>`;});out+='</tr>';}
 root.querySelector('tbody').innerHTML=out;
});

define('sheet-tabs',`<style>
:host{display:flex;align-items:center;height:40px;border-top:1px solid #d8d5dc;padding-bottom:2px;flex:none}
.tab{align-self:flex-start;margin:-1px 0 0 45px;height:36px;width:80px;background:#fcfcfc;border-radius:0 0 5px 5px;font-size:18px;align-items:flex-start;box-shadow:0 1px 2px #0001}
.tab span{width:60px;line-height:30px;border-bottom:3px solid #1f6049}
.line{width:1px;height:24px;background:#cbc8d2;margin:0 53px 0 5px}
.dt{margin-left:auto}
.bar{display:flex;align-items:center;gap:5px;margin-left:18px;height:21px;width:648px;background:#f4f3f5;border-radius:10px 0 0 10px;padding-left:6px}
.thumb{flex:1;height:11px;border-radius:6px 0 0 6px;background:#6d6d6d}
</style><button class="tab"><span>Sheet1</span></button><i class="line"></i><button aria-label="新建工作表"><x-icon name="plus"></x-icon></button><x-icon class="dt" name="dots"></x-icon><div class="bar"><button aria-label="向左滚动"><x-icon name="left"></x-icon></button><div class="thumb"></div></div>`);

define('status-bar',`<style>
:host{display:flex;justify-content:flex-end;align-items:center;height:27px;background:#f1f1f1;flex:none;overflow:hidden}
button{width:50px;height:27px}
.on{background:#dcdcdc}
.m{width:12px;margin:0 5px 0 6px}
input{-webkit-appearance:none;appearance:none;width:126px;height:20px;margin-right:-15px;background:linear-gradient(#777,#777) center/100% 1px no-repeat}
input::-webkit-slider-thumb{-webkit-appearance:none;width:6px;height:14px;background:#5c5c5c}
</style><button class="on" aria-label="普通"><x-icon name="vgrid"></x-icon></button><button aria-label="页面布局"><x-icon name="vpage"></x-icon></button><button aria-label="分页预览"><x-icon name="vbreak"></x-icon></button><button class="m" aria-label="缩小"><svg width="10" height="2"><path d="M0 1h10" stroke="#333" stroke-width="1.500"/></svg></button><input type="range" aria-label="显示比例" value="50">`);

define('task-app',el=>`<style>
:host{display:block;flex:none;width:50px;height:50px}
button{width:50px;height:50px;border-radius:5px;position:relative}
:host([active]) button{background:#343a38}
:host([alert]) button{background:#482825}
button::after{content:"";display:none;position:absolute;bottom:1px;left:21px;width:8px;height:4px;border-radius:2px;background:#9a9d9b}
:host([running]) button::after{display:block}
:host([active]) button::after{width:20px;left:15px;background:#4bacea}
:host([alert]) button::after{background:#f5aba5}
b{position:absolute;right:4px;top:4px;width:20px;height:20px;border-radius:50%;background:#45b2f3;color:#112;font:400 14px/20px "Open Sans",sans-serif}
x-icon[name=mail]{margin-top:-8px}
</style><button aria-label="${el.getAttribute('label')}"><x-icon name="${el.getAttribute('icon')}"></x-icon>${el.hasAttribute('badge')?`<b>${el.getAttribute('badge')}</b>`:''}</button>`);

define('task-bar',`<style>
:host{display:flex;align-items:center;height:60px;background:#232826;color:#f2f2f2;flex:none;white-space:nowrap;overflow:hidden;justify-content:flex-end}
.apps{display:flex;align-items:center;gap:5px;margin-right:17px}
.s{display:flex;align-items:center;gap:12px;width:273px;height:40px;border-radius:20px;background:#3c413f;padding:0 4px 0 14px;margin:0 0 0 2px;font-size:18px}
.s input{flex:1;height:36px;width:20px}
.s input::placeholder{color:#e2e2e2;opacity:1}
.tray{display:flex;align-items:center}
.tray button{width:40px;height:40px}
.tray .n{width:30px}
.tray .ime{font-size:20px}
.sys{display:flex;margin-left:6px}
.date{align-self:flex-end;width:24px;font-size:15px;line-height:20px;padding-bottom:10px;margin-left:16px}
</style>
<div class="apps"><task-app icon="win" label="开始"></task-app><label class="s"><x-icon name="tsearch"></x-icon><input placeholder="搜索" aria-label="搜索"><x-icon name="brief"></x-icon></label><task-app icon="mail" badge="1" label="邮件"></task-app><task-app icon="edge" running label="Edge"></task-app><task-app icon="chrome" label="Chrome"></task-app><task-app icon="snip" running alert label="截图工具"></task-app><task-app icon="folder" running label="文件资源管理器"></task-app><task-app icon="outlook" label="Outlook"></task-app><task-app icon="store" label="应用商店"></task-app><task-app icon="excel" running active label="Excel"></task-app><task-app icon="ppt" running label="PowerPoint"></task-app><task-app icon="video" running label="录屏"></task-app></div>
<div class="tray"><button aria-label="显示隐藏的图标"><x-icon name="up"></x-icon></button><button aria-label="会议"><x-icon name="maxhub"></x-icon></button><button aria-label="调节"><x-icon name="eq"></x-icon></button><button aria-label="云盘"><x-icon name="cloud"></x-icon></button><button aria-label="OneDrive"><x-icon name="bcloud"></x-icon></button><button aria-label="麦克风"><x-icon name="mic"></x-icon></button><button class="ime">英</button><div class="sys"><button class="n" aria-label="网络"><x-icon name="wifi"></x-icon></button><button class="n" aria-label="音量"><x-icon name="mute"></x-icon></button><button class="n" aria-label="电池"><x-icon name="batt"></x-icon></button></div></div><span class="date">202</span>`);

define('excel-window',`<style>
:host{display:flex;flex-direction:column;height:100vh;overflow:hidden;background:linear-gradient(90deg,#ebe7ee 0,#ebe5ec 45%,#e5e2ec 55%,#e2e3e9 75%,#e5e4ec 100%)}
</style><title-bar></title-bar><ribbon-tabs></ribbon-tabs><ribbon-bar></ribbon-bar><formula-bar></formula-bar><sheet-grid></sheet-grid><sheet-tabs></sheet-tabs><status-bar></status-bar><task-bar></task-bar>`);
</script>
</body>
</html>
